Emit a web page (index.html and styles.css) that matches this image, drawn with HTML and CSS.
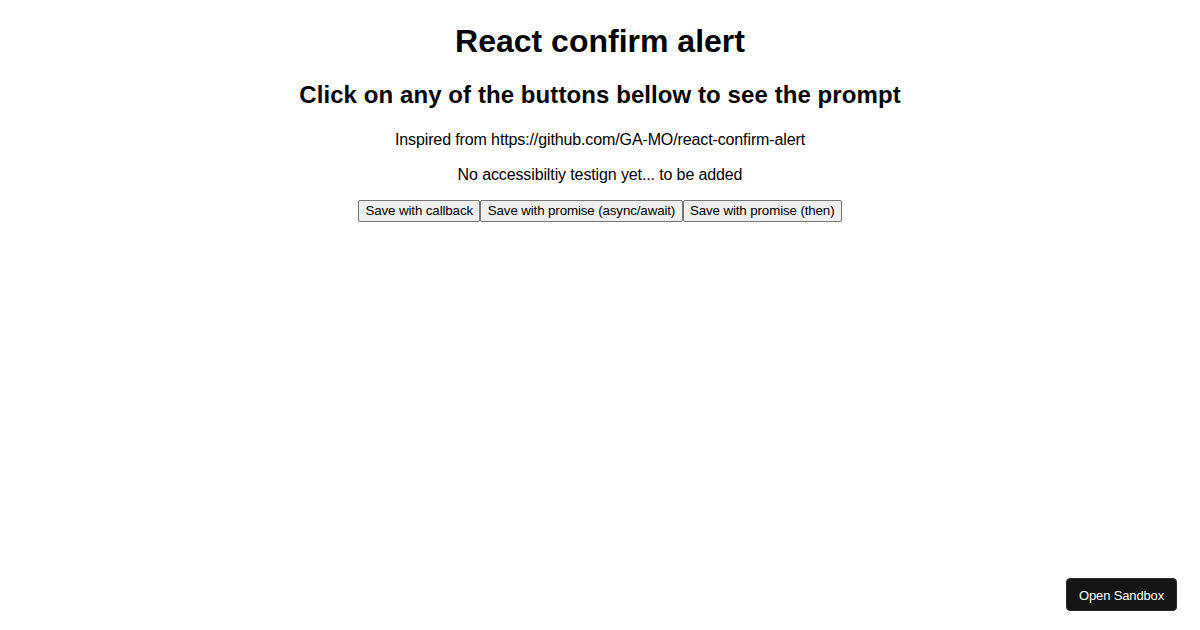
FILE: index.html
```html
<!DOCTYPE html>
<html>
<head>
<meta charset="utf-8">
<link rel="stylesheet" href="styles.css">
</head>
<body>
<div class="App">
  <h1 class="title">React confirm alert</h1>
  <h2 class="subtitle">Click on any of the buttons bellow to see the prompt</h2>
  <p class="note">Inspired from https://github.com/GA-MO/react-confirm-alert</p>
  <p class="note">No accessibiltiy testign yet... to be added</p>
  <div class="actions"><button class="btn">Save with callback</button><button class="btn">Save with promise (async/await)</button><button class="btn">Save with promise (then)</button></div>
</div>
<a class="open-sandbox" href="#">Open Sandbox</a>
</body>
</html>
```
FILE: styles.css
```css
html, body {
  background: #fff;
}
body {
  margin: 0 8px;
  color: #000;
}
.App {
  font-family: "Liberation Sans", Arial, sans-serif;
  text-align: center;
  padding-top: 0.1px;
}
.title {
  font-size: 32px;
  line-height: 1.2;
  margin: 21.44px 0;
}
.subtitle {
  font-size: 24px;
  line-height: 1.2;
  margin: 19.92px 0;
  letter-spacing: 0.08px;
}
.note {
  font-size: 16px;
  line-height: 1.2;
  margin: 16px 0;
  letter-spacing: -0.12px;
}
.btn {
  font-family: "Liberation Sans", Arial, sans-serif;
  font-size: 13.333px;
  line-height: 16px;
  letter-spacing: -0.12px;
  color: #000;
  background: #efefef;
  border: 1px solid #767676;
  border-radius: 2px;
  padding: 2px 6.4px;
  margin: 0;
}
.open-sandbox {
  position: fixed;
  right: 23px;
  bottom: 19px;
  background: #151515;
  color: #fff;
  font-family: "Liberation Sans", Arial, sans-serif;
  font-size: 13px;
  letter-spacing: -0.15px;
  text-decoration: none;
  padding: 0 12px;
  height: 33px;
  line-height: 33px;
  border-radius: 4px;
  border: 1px solid #2a2a2a;
  box-sizing: border-box;
}
```
